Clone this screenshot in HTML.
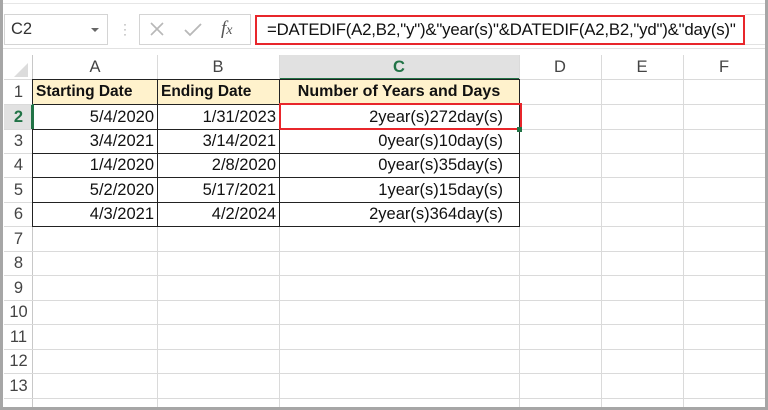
<!DOCTYPE html>
<html><head><meta charset="utf-8"><style>
*{margin:0;padding:0;box-sizing:border-box}
body{width:768px;height:410px;background:#fff;position:relative;overflow:hidden;font-family:"Liberation Sans",sans-serif;color:#000}
.a{position:absolute}
.h{position:absolute;height:1px;background:#dadada}
.v{position:absolute;width:1px;background:#dadada}
.t{position:absolute;font-size:16.5px;line-height:24px;white-space:nowrap;color:#111}
.r{text-align:right}
.c{text-align:center}
.rh{position:absolute;left:4px;width:29px;text-align:center;font-size:16.5px;color:#444;line-height:24px}
.ch{position:absolute;top:55px;height:25px;text-align:center;font-size:16.5px;color:#444;line-height:25px}
</style></head><body>
<div class="a" style="left:0;top:0;width:3px;height:410px;background:#a6a6a6"></div>
<div class="a" style="left:0;top:407px;width:768px;height:3px;background:#a6a6a6"></div>
<div class="a" style="left:765px;top:0;width:3px;height:410px;background:#a6a6a6"></div>
<div class="a" style="left:3px;top:3px;width:762px;height:1px;background:#e6e6e6"></div>
<div class="a" style="left:3px;top:48px;width:762px;height:1px;background:#e2e2e2"></div>
<div class="a" style="left:4px;top:14px;width:104px;height:31px;border:1px solid #d4d4d4"></div>
<div class="t" style="left:11px;top:17px;font-size:16.5px;color:#333">C2</div>
<div class="a" style="left:91px;top:28px;width:0;height:0;border-left:4px solid transparent;border-right:4px solid transparent;border-top:4px solid #666"></div>
<div class="a" style="left:123px;top:22px;color:#999;font-size:12px;line-height:5px">·<br>·<br>·</div>
<div class="a" style="left:139px;top:14px;width:112px;height:31px;border:1px solid #d4d4d4"></div>
<svg class="a" style="left:148px;top:20px" width="100" height="20">
<path d="M3 3 L15 15 M15 3 L3 15" stroke="#b8b8b8" stroke-width="1.6" fill="none"/>
<path d="M37 10 L42 15 L53 4" stroke="#b8b8b8" stroke-width="1.8" fill="none"/>
</svg>
<div class="t" style="left:221px;top:17px;font-family:'Liberation Serif',serif;font-style:italic;font-size:19px;color:#555">f<span style="font-size:14px">x</span></div>
<div class="a" style="left:255px;top:15px;width:490px;height:30px;border:2px solid #e8262b"></div>
<div class="t" style="left:267px;top:18px;font-size:16.8px;color:#111;letter-spacing:-0.2px">=DATEDIF(A2,B2,"y")&amp;"year(s)"&amp;DATEDIF(A2,B2,"yd")&amp;"day(s)"</div>
<div class="a" style="left:745px;top:14px;width:20px;height:31px;border-top:1px solid #e2e2e2;border-bottom:1px solid #e2e2e2"></div>

<div class="a" style="left:279px;top:55px;width:240px;height:25px;background:#e1e1e1;border-bottom:2px solid #217346"></div>
<div class="a" style="left:4px;top:104px;width:29px;height:25px;background:#e1e1e1;border-right:2px solid #217346"></div>
<svg class="a" style="left:12px;top:62px" width="18" height="16"><path d="M16 1 L16 15 L2 15 Z" fill="#dcdcdc"/></svg>
<div class="h" style="left:4px;top:79px;width:761px"></div>
<div class="ch" style="left:33px;width:124px">A</div>
<div class="ch" style="left:157px;width:122px">B</div>
<div class="ch" style="left:279px;width:240px;color:#217346;font-weight:bold">C</div>
<div class="ch" style="left:519px;width:82px">D</div>
<div class="ch" style="left:601px;width:82px">E</div>
<div class="ch" style="left:683px;width:82px">F</div>

<div class="v" style="left:32px;top:55px;height:352px;background:#c8c8c8"></div>
<div class="v" style="left:157px;top:55px;height:352px"></div>
<div class="v" style="left:279px;top:55px;height:352px"></div>
<div class="v" style="left:519px;top:55px;height:352px"></div>
<div class="v" style="left:601px;top:55px;height:352px"></div>
<div class="v" style="left:683px;top:55px;height:352px"></div>

<div class="h" style="left:4px;top:104px;width:761px"></div>
<div class="h" style="left:4px;top:129px;width:761px"></div>
<div class="h" style="left:4px;top:153px;width:761px"></div>
<div class="h" style="left:4px;top:177px;width:761px"></div>
<div class="h" style="left:4px;top:202px;width:761px"></div>
<div class="h" style="left:4px;top:226px;width:761px"></div>
<div class="h" style="left:4px;top:251px;width:761px"></div>
<div class="h" style="left:4px;top:275px;width:761px"></div>
<div class="h" style="left:4px;top:300px;width:761px"></div>
<div class="h" style="left:4px;top:324px;width:761px"></div>
<div class="h" style="left:4px;top:349px;width:761px"></div>
<div class="h" style="left:4px;top:373px;width:761px"></div>
<div class="h" style="left:4px;top:398px;width:761px"></div>

<div class="a" style="left:33px;top:80px;width:486px;height:24px;background:#fff2cc"></div>
<div class="a" style="left:32px;top:79px;width:488px;height:148px;border:1px solid #222"></div>
<div class="a" style="left:157px;top:80px;width:1px;height:147px;background:#222"></div>
<div class="a" style="left:279px;top:80px;width:1px;height:147px;background:#222"></div>
<div class="a" style="left:33px;top:104px;width:486px;height:1px;background:#222"></div>
<div class="a" style="left:33px;top:129px;width:486px;height:1px;background:#222"></div>
<div class="a" style="left:33px;top:153px;width:486px;height:1px;background:#222"></div>
<div class="a" style="left:33px;top:177px;width:486px;height:1px;background:#222"></div>
<div class="a" style="left:33px;top:202px;width:486px;height:1px;background:#222"></div>
<div class="a" style="left:32px;top:104px;width:2px;height:25px;background:#217346"></div>
<div class="a" style="left:279px;top:103px;width:243px;height:27px;border:2px solid #e8262b"></div>
<div class="a" style="left:517px;top:127px;width:5px;height:5px;background:#217346"></div>

<div class="rh" style="top:80px">1</div>
<div class="rh" style="top:105px;color:#217346;font-weight:bold">2</div>
<div class="rh" style="top:129px">3</div>
<div class="rh" style="top:153px">4</div>
<div class="rh" style="top:178px">5</div>
<div class="rh" style="top:202px">6</div>
<div class="rh" style="top:227px">7</div>
<div class="rh" style="top:251px">8</div>
<div class="rh" style="top:276px">9</div>
<div class="rh" style="top:300px">10</div>
<div class="rh" style="top:325px">11</div>
<div class="rh" style="top:349px">12</div>
<div class="rh" style="top:374px">13</div>

<div class="t" style="left:36px;top:80px;font-weight:bold;font-size:15.5px">Starting Date</div>
<div class="t" style="left:161px;top:80px;font-weight:bold;font-size:15.5px">Ending Date</div>
<div class="t c" style="left:279px;top:80px;width:240px;font-weight:bold;font-size:16px">Number of Years and Days</div>

<div class="t r" style="left:33px;width:121px;top:105px">5/4/2020</div>
<div class="t r" style="left:157px;width:119px;top:105px">1/31/2023</div>
<div class="t r" style="left:279px;width:224px;top:105px">2year(s)272day(s)</div>
<div class="t r" style="left:33px;width:121px;top:129px">3/4/2021</div>
<div class="t r" style="left:157px;width:119px;top:129px">3/14/2021</div>
<div class="t r" style="left:279px;width:224px;top:129px">0year(s)10day(s)</div>
<div class="t r" style="left:33px;width:121px;top:153px">1/4/2020</div>
<div class="t r" style="left:157px;width:119px;top:153px">2/8/2020</div>
<div class="t r" style="left:279px;width:224px;top:153px">0year(s)35day(s)</div>
<div class="t r" style="left:33px;width:121px;top:178px">5/2/2020</div>
<div class="t r" style="left:157px;width:119px;top:178px">5/17/2021</div>
<div class="t r" style="left:279px;width:224px;top:178px">1year(s)15day(s)</div>
<div class="t r" style="left:33px;width:121px;top:202px">4/3/2021</div>
<div class="t r" style="left:157px;width:119px;top:202px">4/2/2024</div>
<div class="t r" style="left:279px;width:224px;top:202px">2year(s)364day(s)</div>
</body></html>
